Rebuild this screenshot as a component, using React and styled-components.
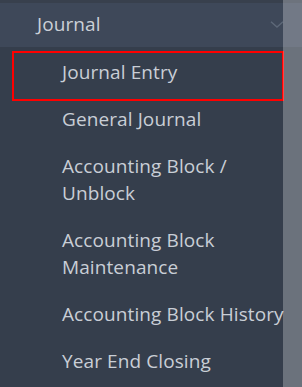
import React from 'react';
import styled, { createGlobalStyle } from 'styled-components';

const GlobalStyle = createGlobalStyle`
  html, body {
    margin: 0;
    padding: 0;
    background: #353e4c;
  }
  body {
    font-family: "Open Sans", "Noto Sans", sans-serif;
  }
`;

const items = [
  { label: 'Journal Entry', active: true },
  { label: 'General Journal' },
  { label: 'Accounting Block / Unblock' },
  { label: 'Accounting Block Maintenance' },
  { label: 'Accounting Block History' },
  { label: 'Year End Closing' },
];

function App() {
  return (
    <>
      <GlobalStyle />
      <Sidebar>
        <TopStrip />
        <GroupHeader>
          <GroupTitle>Journal</GroupTitle>
          <Chevron viewBox="0 0 14 7" aria-hidden="true">
            <path d="M1 0.8 L7 6 L13 0.8" />
          </Chevron>
        </GroupHeader>
        <SubList>
          {items.map((item) => (
            <SubItem key={item.label}>
              <SubLabel>{item.label}</SubLabel>
              {item.active && <Highlight />}
            </SubItem>
          ))}
        </SubList>
        <ScrollTrack />
      </Sidebar>
    </>
  );
}

export default App;

const Sidebar = styled.nav`
  position: relative;
  width: 302px;
  height: 387px;
  overflow: hidden;
  background: #353e4c;
  color: #cdd2d9;
`;

const TopStrip = styled.div`
  height: 3px;
  background: #38404d;
`;

const GroupHeader = styled.div`
  display: flex;
  align-items: center;
  justify-content: space-between;
  box-sizing: border-box;
  height: 44px;
  padding: 0 18px 0 37px;
  background: #3e4859;
`;

const GroupTitle = styled.span`
  font-size: 19px;
  line-height: 27px;
  letter-spacing: 0.1px;
  color: #cbd0d7;
  margin-top: -1px;
`;

const Chevron = styled.svg`
  width: 14px;
  height: 7px;
  margin-top: -2px;
  fill: none;
  stroke: #5d6878;
  stroke-width: 1.4;
`;

const SubList = styled.ul`
  list-style: none;
  margin: 0;
  padding: 2px 0 0 0;
  width: 283px;
`;

const SubItem = styled.li`
  position: relative;
  padding: 10px 0 10px 62px;
`;

const SubLabel = styled.span`
  display: block;
  width: 232px;
  font-size: 19px;
  line-height: 27px;
  color: #c9ced6;
  letter-spacing: 0.1px;
`;

const Highlight = styled.span`
  position: absolute;
  top: 2px;
  left: 12px;
  width: 272px;
  height: 50px;
  box-sizing: border-box;
  border: 2px solid #ff0000;
`;

const ScrollTrack = styled.div`
  position: absolute;
  top: 0;
  right: 0;
  width: 19px;
  height: 100%;
  background: rgba(255, 255, 255, 0.27);
`;
